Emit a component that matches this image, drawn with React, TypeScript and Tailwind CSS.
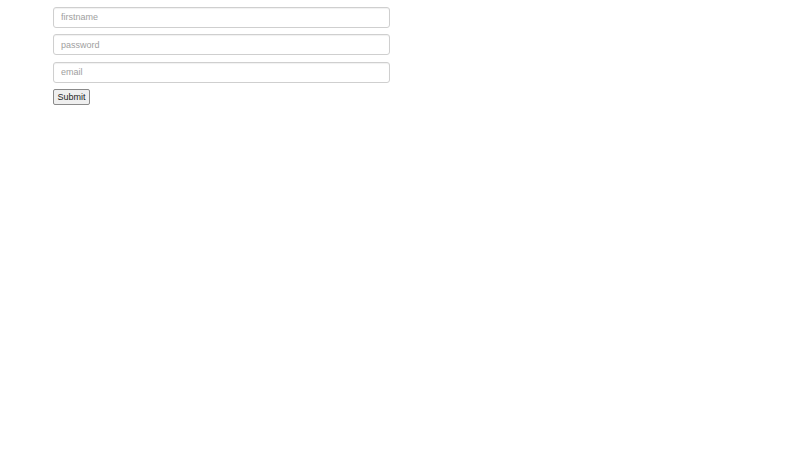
export default function App() {
  return (
    <div className="min-h-[450px] bg-white pl-[53px] pt-[6.5px] font-['Liberation_Sans',Arial,sans-serif]">
      <form className="flex w-[337px] flex-col items-start gap-[6.5px]" onSubmit={(e) => e.preventDefault()}>
        <input
          type="text"
          placeholder="firstname"
          className="h-[21px] w-full rounded-[3px] border border-[#cfcfcf] bg-white px-[7px] text-[9px] text-[#555] shadow-[inset_0_1px_1px_rgba(0,0,0,0.06)] outline-none placeholder:text-[#a0a0a0]"
        />
        <input
          type="password"
          placeholder="password"
          className="h-[21px] w-full rounded-[3px] border border-[#cfcfcf] bg-white px-[7px] text-[9px] text-[#555] shadow-[inset_0_1px_1px_rgba(0,0,0,0.06)] outline-none placeholder:text-[#a0a0a0]"
        />
        <input
          type="email"
          placeholder="email"
          className="h-[21px] w-full rounded-[3px] border border-[#cfcfcf] bg-white px-[7px] text-[9px] text-[#555] shadow-[inset_0_1px_1px_rgba(0,0,0,0.06)] outline-none placeholder:text-[#a0a0a0]"
        />
        <button
          type="submit"
          className="block h-[16px] w-[37px] rounded-[2px] border border-[#8a8a8a] bg-[#efefef] p-0 text-[9px] leading-none text-[#222]"
        >
          Submit
        </button>
      </form>
    </div>
  );
}
